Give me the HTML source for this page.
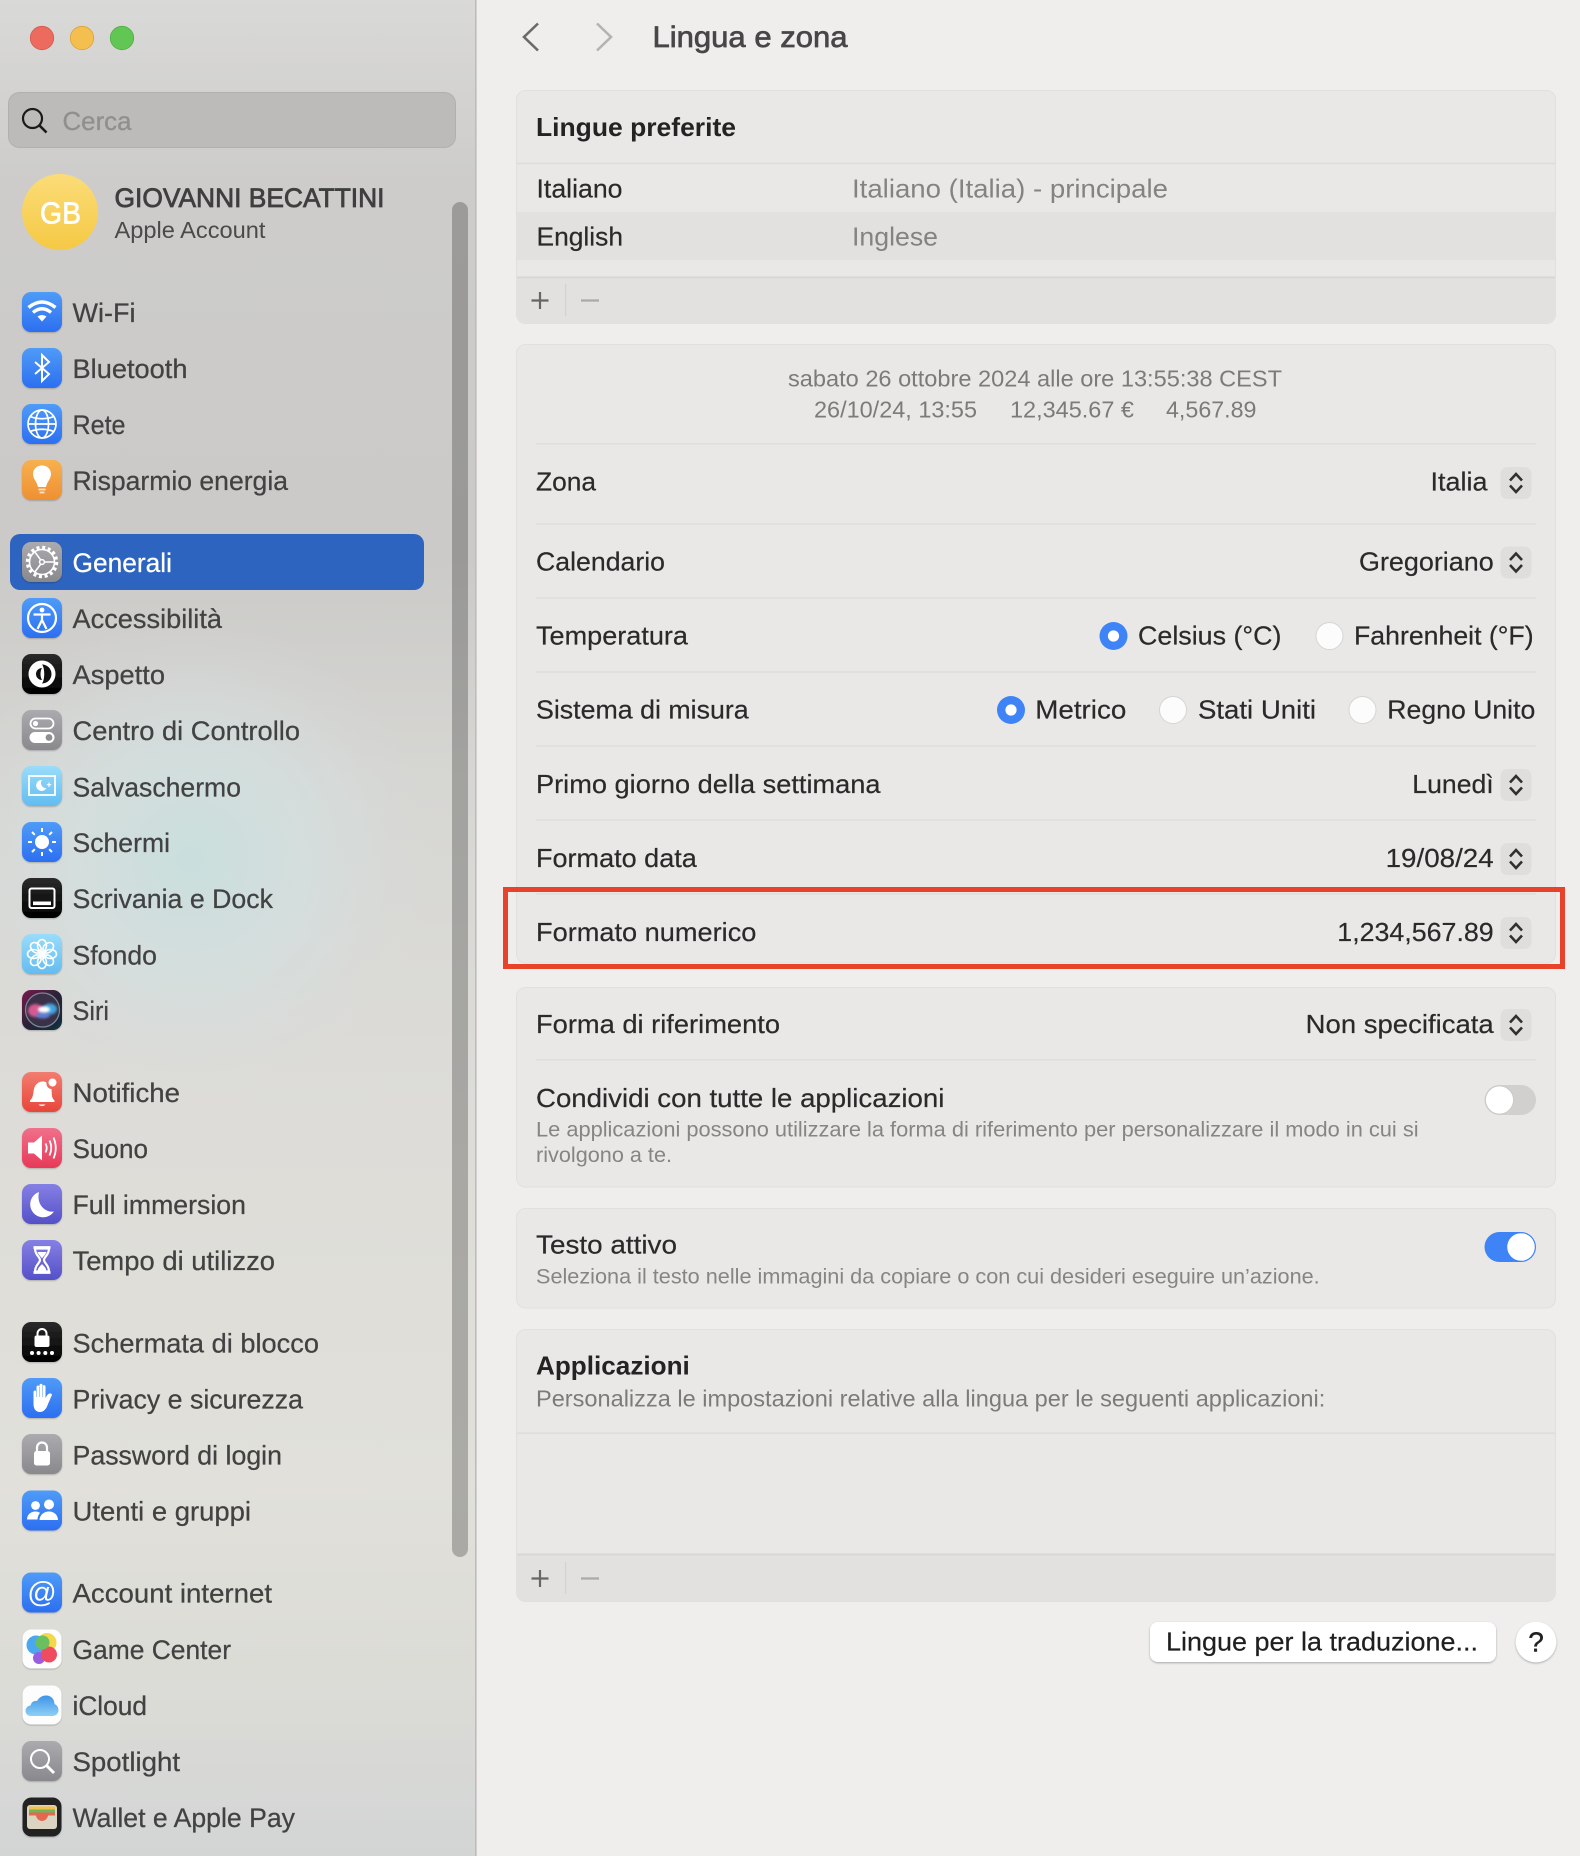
<!DOCTYPE html>
<html lang="it">
<head>
<meta charset="utf-8">
<title>Lingua e zona</title>
<style>
html,body{margin:0;padding:0;background:#efeeec;width:1580px;height:1856px;overflow:hidden}
svg{display:block;position:absolute;left:0;top:0}
text{font-family:"Liberation Sans",sans-serif;white-space:pre}
.s{font-size:26.5px;fill:#424242;stroke:#424242;stroke-width:.25px}
.r{font-size:26px;fill:#2a2a2a;stroke:#2a2a2a;stroke-width:.2px}
.g{font-size:26px;fill:#838381}
.d{font-size:21.5px;fill:#858584}
.p{font-size:23.5px;fill:#7b7b7a}
.b{font-size:26px;font-weight:bold;fill:#232323}
.w{fill:#fff}
</style>
</head>
<body>
<svg width="1580" height="1856" viewBox="0 0 1580 1856" xmlns="http://www.w3.org/2000/svg">
<defs>
<linearGradient id="side" x1="0" y1="0" x2="0" y2="1">
<stop offset="0" stop-color="#d9d9d7"/><stop offset=".1" stop-color="#cdccca"/><stop offset=".3" stop-color="#cbcac8"/><stop offset=".42" stop-color="#d6d6d3"/><stop offset=".6" stop-color="#dddcd8"/><stop offset=".8" stop-color="#e1e0da"/><stop offset=".9" stop-color="#dcdcd7"/><stop offset="1" stop-color="#d3d5d5"/>
</linearGradient>
<radialGradient id="teal" gradientUnits="userSpaceOnUse" cx="190" cy="860" r="240">
<stop offset="0" stop-color="#c9dfdd"/><stop offset=".5" stop-color="#d3e0e0" stop-opacity=".7"/><stop offset="1" stop-color="#d9dcdb" stop-opacity="0"/>
</radialGradient>
<linearGradient id="blue" x1="0" y1="0" x2="0" y2="1"><stop offset="0" stop-color="#4f9bf8"/><stop offset="1" stop-color="#2c6ff0"/></linearGradient>
<linearGradient id="gray" x1="0" y1="0" x2="0" y2="1"><stop offset="0" stop-color="#ababaf"/><stop offset="1" stop-color="#88888d"/></linearGradient>
<linearGradient id="lblue" x1="0" y1="0" x2="0" y2="1"><stop offset="0" stop-color="#9adcfa"/><stop offset="1" stop-color="#62bcf0"/></linearGradient>
<linearGradient id="orange" x1="0" y1="0" x2="0" y2="1"><stop offset="0" stop-color="#f7b04f"/><stop offset="1" stop-color="#ee9033"/></linearGradient>
<linearGradient id="red" x1="0" y1="0" x2="0" y2="1"><stop offset="0" stop-color="#f27d70"/><stop offset="1" stop-color="#e8463a"/></linearGradient>
<linearGradient id="pink" x1="0" y1="0" x2="0" y2="1"><stop offset="0" stop-color="#f0708a"/><stop offset="1" stop-color="#e63a58"/></linearGradient>
<linearGradient id="indigo" x1="0" y1="0" x2="0" y2="1"><stop offset="0" stop-color="#8580e4"/><stop offset="1" stop-color="#5550c8"/></linearGradient>
<linearGradient id="black" x1="0" y1="0" x2="0" y2="1"><stop offset="0" stop-color="#2a2a2a"/><stop offset="1" stop-color="#000"/></linearGradient>
<linearGradient id="avatar" x1="0" y1="0" x2="0" y2="1"><stop offset="0" stop-color="#fbdc78"/><stop offset="1" stop-color="#f5c944"/></linearGradient>
<linearGradient id="cloud" x1="0" y1="0" x2="0" y2="1"><stop offset="0" stop-color="#3d94e8"/><stop offset="1" stop-color="#8fd0f4"/></linearGradient>
<linearGradient id="sirib" x1="0" y1="0" x2="1" y2="1"><stop offset="0" stop-color="#7a1d50"/><stop offset=".5" stop-color="#2a2236"/><stop offset="1" stop-color="#0e3040"/></linearGradient>
<filter id="ish" x="-10%" y="-10%" width="120%" height="125%"><feDropShadow dx="0" dy="1" stdDeviation=".8" flood-color="#000" flood-opacity=".22"/></filter>
<filter id="bsh" x="-10%" y="-20%" width="120%" height="150%"><feDropShadow dx="0" dy="1" stdDeviation="1" flood-color="#000" flood-opacity=".3"/></filter>
<filter id="soft" x="-30%" y="-30%" width="160%" height="160%"><feGaussianBlur stdDeviation="1.4"/></filter>
<g id="st">
<rect x="-15.5" y="-16" width="31" height="32" rx="7" fill="#dfdedc"/>
<path d="M-6-2.5 0-9 6-2.5M-6 2.5 0 9 6 2.5" fill="none" stroke="#303030" stroke-width="2.6"/>
</g>
<g id="ron"><circle r="14" fill="#3f84f6"/><circle r="5.6" fill="#fff"/></g>
<g id="rof"><circle r="13.5" fill="#fcfcfc" stroke="#d6d5d3" stroke-width="1"/></g>
</defs>

<!-- main bg -->
<rect width="1580" height="1856" fill="#efeeec"/>
<!-- sidebar -->
<rect width="475" height="1856" fill="url(#side)"/>
<rect width="475" height="1856" fill="url(#teal)"/>
<rect x="475" width="1.6" height="1856" fill="#bdbcba"/>
<!-- traffic lights -->
<circle cx="42" cy="38" r="11.7" fill="#ed6a5e" stroke="#d5574c" stroke-width=".8"/>
<circle cx="82" cy="38" r="11.7" fill="#f5bf4f" stroke="#dca23a" stroke-width=".8"/>
<circle cx="122" cy="38" r="11.7" fill="#62c655" stroke="#52ad45" stroke-width=".8"/>
<!-- search -->
<rect x="8.5" y="92.5" width="447" height="55" rx="11" fill="#bcbbb9" stroke="#b1b0ae"/>
<circle cx="32.5" cy="118.5" r="9.5" fill="none" stroke="#1a1a1a" stroke-width="2.2"/>
<path d="M39.5 125.5 46.5 132.5" stroke="#1a1a1a" stroke-width="2.6"/>
<text x="62.5" y="129.8" font-size="26" fill="#8f8f8d" stroke="#8f8f8d" stroke-width=".3" textLength="69" lengthAdjust="spacingAndGlyphs">Cerca</text>
<!-- profile -->
<ellipse cx="60" cy="212" rx="38" ry="38" fill="url(#avatar)"/>
<text x="40" y="223.4" font-size="31" fill="#fff" stroke="#fff" stroke-width=".7" textLength="41" lengthAdjust="spacingAndGlyphs">GB</text>
<text x="114.5" y="207" font-size="27" fill="#3f3f3f" stroke="#3f3f3f" stroke-width=".8" textLength="270" lengthAdjust="spacingAndGlyphs">GIOVANNI BECATTINI</text>
<text x="114.5" y="238" font-size="23" fill="#4a4a4a" textLength="151" lengthAdjust="spacingAndGlyphs">Apple Account</text>
<!-- scrollbar -->
<rect x="452" y="202" width="16" height="1355" rx="8" fill="#000" fill-opacity=".24"/>
<!-- selected -->
<rect x="10" y="534" width="414" height="56" rx="10" fill="#2d64c0"/>

<!-- sidebar labels -->
<g>
<text class="s" x="72.5" y="322" textLength="63" lengthAdjust="spacingAndGlyphs">Wi-Fi</text>
<text class="s" x="72.5" y="378" textLength="115" lengthAdjust="spacingAndGlyphs">Bluetooth</text>
<text class="s" x="72.5" y="434" textLength="53" lengthAdjust="spacingAndGlyphs">Rete</text>
<text class="s" x="72.5" y="490" textLength="215.5" lengthAdjust="spacingAndGlyphs">Risparmio energia</text>
<text class="s" x="72.5" y="572" textLength="99.5" lengthAdjust="spacingAndGlyphs" style="fill:#fff;stroke:#fff">Generali</text>
<text class="s" x="72.5" y="628" textLength="149.5" lengthAdjust="spacingAndGlyphs">Accessibilità</text>
<text class="s" x="72.5" y="684" textLength="92.5" lengthAdjust="spacingAndGlyphs">Aspetto</text>
<text class="s" x="72.5" y="740" textLength="227.5" lengthAdjust="spacingAndGlyphs">Centro di Controllo</text>
<text class="s" x="72.5" y="796.5" textLength="168.5" lengthAdjust="spacingAndGlyphs">Salvaschermo</text>
<text class="s" x="72.5" y="852" textLength="97.5" lengthAdjust="spacingAndGlyphs">Schermi</text>
<text class="s" x="72.5" y="908" textLength="200.5" lengthAdjust="spacingAndGlyphs">Scrivania e Dock</text>
<text class="s" x="72.5" y="964.5" textLength="84.5" lengthAdjust="spacingAndGlyphs">Sfondo</text>
<text class="s" x="72.5" y="1020" textLength="36.5" lengthAdjust="spacingAndGlyphs">Siri</text>
<text class="s" x="72.5" y="1102" textLength="107.5" lengthAdjust="spacingAndGlyphs">Notifiche</text>
<text class="s" x="72.5" y="1158" textLength="75.5" lengthAdjust="spacingAndGlyphs">Suono</text>
<text class="s" x="72.5" y="1214" textLength="173.5" lengthAdjust="spacingAndGlyphs">Full immersion</text>
<text class="s" x="72.5" y="1270" textLength="202.5" lengthAdjust="spacingAndGlyphs">Tempo di utilizzo</text>
<text class="s" x="72.5" y="1352.5" textLength="246.5" lengthAdjust="spacingAndGlyphs">Schermata di blocco</text>
<text class="s" x="72.5" y="1408.5" textLength="230.5" lengthAdjust="spacingAndGlyphs">Privacy e sicurezza</text>
<text class="s" x="72.5" y="1464.5" textLength="209.5" lengthAdjust="spacingAndGlyphs">Password di login</text>
<text class="s" x="72.5" y="1520.5" textLength="178.5" lengthAdjust="spacingAndGlyphs">Utenti e gruppi</text>
<text class="s" x="72.5" y="1602.5" textLength="199.5" lengthAdjust="spacingAndGlyphs">Account internet</text>
<text class="s" x="72.5" y="1659" textLength="158.5" lengthAdjust="spacingAndGlyphs">Game Center</text>
<text class="s" x="72.5" y="1715" textLength="74.5" lengthAdjust="spacingAndGlyphs">iCloud</text>
<text class="s" x="72.5" y="1771" textLength="107.5" lengthAdjust="spacingAndGlyphs">Spotlight</text>
<text class="s" x="72.5" y="1827" textLength="222.5" lengthAdjust="spacingAndGlyphs">Wallet e Apple Pay</text>
</g>

<!-- ICONS -->
<!-- wifi -->
<g transform="translate(22 292)"><rect width="40" height="40" rx="9" fill="url(#blue)" filter="url(#ish)"/>
<path d="M6.5 15.5Q20 4.5 33.5 15.5M11 20.5Q20 13 29 20.5" fill="none" stroke="#fff" stroke-width="3.4"/><path d="M15.5 24.5Q20 21.5 24.5 24.5L20 29.5Z" fill="#fff"/></g>
<!-- bluetooth -->
<g transform="translate(22 348)"><rect width="40" height="40" rx="9" fill="url(#blue)" filter="url(#ish)"/>
<path d="M13 14 27 26 20 33V7L27 14 13 26" fill="none" stroke="#fff" stroke-width="2"/></g>
<!-- rete -->
<g transform="translate(22 404)"><rect width="40" height="40" rx="9" fill="url(#blue)" filter="url(#ish)"/>
<g fill="none" stroke="#fff" stroke-width="1.7"><circle cx="20" cy="20" r="14"/><ellipse cx="20" cy="20" rx="6.5" ry="14"/><path d="M8 12.5Q20 17 32 12.5M8 27.5Q20 23 32 27.5M6 20H34"/></g></g>
<!-- bulb -->
<g transform="translate(22 460)"><rect width="40" height="40" rx="9" fill="url(#orange)" filter="url(#ish)"/>
<path d="M20 5.5C13.5 5.5 11 10.5 11 14C11 19 15 21.5 16 27H24C25 21.5 29 19 29 14C29 10.5 26.5 5.5 20 5.5Z" fill="#fff"/><path d="M16.5 29.5H23.5M17.5 32.5H22.5" stroke="#fbe3c4" stroke-width="1.8"/></g>
<!-- gear -->
<g transform="translate(22 542)"><rect width="40" height="40" rx="9" fill="url(#gray)" filter="url(#ish)"/>
<circle cx="20" cy="20" r="14.5" fill="none" stroke="#fff" stroke-width="3.5" stroke-dasharray="3 2.7"/><circle cx="20" cy="20" r="12.5" fill="none" stroke="#fff" stroke-width="1.6"/>
<circle cx="20" cy="20" r="2.4" fill="none" stroke="#fff" stroke-width="1.5"/><path d="M22.4 20H32.5M18.8 18 12.5 9.5M18.8 22 12.5 30.5" stroke="#fff" stroke-width="1.5"/></g>
<!-- accessibility -->
<g transform="translate(22 598)"><rect width="40" height="40" rx="9" fill="url(#blue)" filter="url(#ish)"/>
<circle cx="20" cy="20" r="14" fill="none" stroke="#fff" stroke-width="2.2"/><circle cx="20" cy="12" r="2.4" fill="#fff"/><path d="M11.5 16.5H28.5M20 16.5V22M20 22 15.5 31M20 22 24.5 31" stroke="#fff" stroke-width="2.2" fill="none"/></g>
<!-- aspetto -->
<g transform="translate(22 654)"><rect width="40" height="40" rx="9" fill="url(#black)" filter="url(#ish)"/>
<circle cx="20" cy="20" r="13.5" fill="#fff"/><path d="M20 10.5A9.5 9.5 0 0 1 20 29.5C23 26 23 14 20 10.5Z" fill="#111"/><path d="M20 14A6 6 0 0 0 20 26C18 23 18 17 20 14Z" fill="#111"/></g>
<!-- centro -->
<g transform="translate(22 710)"><rect width="40" height="40" rx="9" fill="url(#gray)" filter="url(#ish)"/>
<rect x="8.5" y="8.5" width="23" height="10" rx="5" fill="none" stroke="#fff" stroke-width="1.8"/><circle cx="13.5" cy="13.5" r="2.6" fill="#fff"/>
<rect x="7.5" y="22" width="25" height="11" rx="5.5" fill="#fff"/><circle cx="27" cy="27.5" r="3.4" fill="#8e8e93"/></g>
<!-- salvaschermo -->
<g transform="translate(22 766)"><rect width="40" height="40" rx="9" fill="url(#lblue)" filter="url(#ish)"/>
<rect x="7" y="10" width="26" height="19" fill="none" stroke="#fff" stroke-width="1.8"/><path d="M20 14A5.5 5.5 0 1 0 24.5 22 5 5 0 0 1 20 14Z" fill="#fff"/><path d="M27 16.5V21M24.8 18.7H29.2" stroke="#fff" stroke-width="1.1"/></g>
<!-- schermi -->
<g transform="translate(22 822)"><rect width="40" height="40" rx="9" fill="url(#blue)" filter="url(#ish)"/>
<circle cx="20" cy="20" r="7" fill="#fff"/><g stroke="#fff" stroke-width="2"><path d="M20 6V10M20 30V34M6 20H10M30 20H34M10 10 12.8 12.8M27.2 27.2 30 30M10 30 12.8 27.2M27.2 12.8 30 10"/></g></g>
<!-- scrivania -->
<g transform="translate(22 878)"><rect width="40" height="40" rx="9" fill="url(#black)" filter="url(#ish)"/>
<rect x="7.5" y="10.5" width="25" height="19.5" rx="2" fill="none" stroke="#fff" stroke-width="2"/><rect x="11" y="23.5" width="18" height="3.6" fill="#fff"/></g>
<!-- sfondo -->
<g transform="translate(22 934)"><rect width="40" height="40" rx="9" fill="url(#lblue)" filter="url(#ish)"/>
<g fill="none" stroke="#fff" stroke-width="1.6"><ellipse cx="20" cy="11.5" rx="4.5" ry="6"/><ellipse cx="20" cy="28.5" rx="4.5" ry="6"/><ellipse cx="11.5" cy="20" rx="6" ry="4.5"/><ellipse cx="28.5" cy="20" rx="6" ry="4.5"/><ellipse cx="13.8" cy="13.8" rx="4.5" ry="6" transform="rotate(-45 13.8 13.8)"/><ellipse cx="26.2" cy="13.8" rx="4.5" ry="6" transform="rotate(45 26.2 13.8)"/><ellipse cx="13.8" cy="26.2" rx="4.5" ry="6" transform="rotate(45 13.8 26.2)"/><ellipse cx="26.2" cy="26.2" rx="4.5" ry="6" transform="rotate(-45 26.2 26.2)"/></g><circle cx="20" cy="20" r="2.2" fill="#fff"/></g>
<!-- siri -->
<g transform="translate(22 990)"><rect width="40" height="40" rx="9" fill="url(#sirib)" filter="url(#ish)"/>
<circle cx="20.5" cy="20" r="17" fill="#3a3048" stroke="#7b8a94" stroke-width="1.2"/>
<ellipse cx="13.5" cy="20.5" rx="7.5" ry="6.5" fill="#d65a92" filter="url(#soft)"/><ellipse cx="28" cy="19" rx="7" ry="5.5" fill="#3fa4e0" filter="url(#soft)"/><ellipse cx="21" cy="25" rx="7" ry="3.5" fill="#5f7fd0" filter="url(#soft)"/><ellipse cx="22" cy="19.5" rx="6" ry="3.2" fill="#fff" filter="url(#soft)"/></g>
<!-- notifiche -->
<g transform="translate(22 1072)"><rect width="40" height="40" rx="9" fill="url(#red)" filter="url(#ish)"/>
<path d="M8 28.5C11.5 25.5 11 21 12 17C13 12.5 16.5 9.5 21 9.5C23 9.5 24.5 10.5 24.5 10.5C24 14 26.5 17 29.5 17C30 21 29 25.5 32.5 28.5V30H8Z" fill="#fff"/><circle cx="30.5" cy="10.5" r="4" fill="#fff"/><path d="M16.5 32.5A4 2.8 0 0 0 23.5 32.5Z" fill="#fff"/></g>
<!-- suono -->
<g transform="translate(22 1128)"><rect width="40" height="40" rx="9" fill="url(#pink)" filter="url(#ish)"/>
<path d="M6 14.5H12L20 7.5V32.5L12 25.5H6Z" fill="#fff"/><path d="M23.5 15.5Q26 20 23.5 24.5M27.5 12.5Q31 20 27.5 27.5M31.5 9.5Q36 20 31.5 30.5" fill="none" stroke="#fff" stroke-width="1.8"/></g>
<!-- full immersion -->
<g transform="translate(22 1184)"><rect width="40" height="40" rx="9" fill="url(#indigo)" filter="url(#ish)"/>
<path d="M17 8A13 13 0 1 0 32 27.5C24 29 14 21 17 8Z" fill="#fff"/></g>
<!-- tempo -->
<g transform="translate(22 1240)"><rect width="40" height="40" rx="9" fill="url(#indigo)" filter="url(#ish)"/>
<path d="M11.5 7.5H28.5M11.5 32.5H28.5" stroke="#fff" stroke-width="2.8"/><path d="M13 8.5C13 15 18 17 18 20C18 23 13 25 13 31.5H27C27 25 22 23 22 20C22 17 27 15 27 8.5Z" fill="none" stroke="#fff" stroke-width="2.2"/><path d="M15.5 12H24.5C23.5 15 21 16.5 20 18.5C19 16.5 16.5 15 15.5 12ZM15.5 31C16 27 19 25.5 20 24C21 25.5 24 27 24.5 31Z" fill="#fff"/></g>
<!-- schermata -->
<g transform="translate(22 1322)"><rect width="40" height="40" rx="9" fill="url(#black)" filter="url(#ish)"/>
<rect x="12.5" y="13.5" width="15" height="11.5" rx="2" fill="#fff"/><path d="M15.5 14V11.5A4.5 4.5 0 0 1 24.5 11.5V14" fill="none" stroke="#fff" stroke-width="2"/><g fill="#fff"><circle cx="10" cy="31" r="2"/><circle cx="16.6" cy="31" r="2"/><circle cx="23.3" cy="31" r="2"/><circle cx="30" cy="31" r="2"/></g></g>
<!-- privacy -->
<g transform="translate(22 1378)"><rect width="40" height="40" rx="9" fill="url(#blue)" filter="url(#ish)"/>
<path d="M11.5 14C11.5 12 14.5 12 14.5 14V9C14.5 7 17.5 7 17.5 9V7.2C17.5 5.2 20.5 5.2 20.5 7.2V8.5C20.5 6.7 23.5 6.7 23.5 8.5V20C25 17 26 16 27.5 15.5C29.5 15 30.5 16.5 29.5 18L26 26C24.5 31 21.5 34 18 34C13.5 34 11.5 30.5 11.5 26Z" fill="#fff"/><path d="M14.6 12V19M17.6 9V19M20.6 8V19" stroke="#9cc3f7" stroke-width=".9"/></g>
<!-- password -->
<g transform="translate(22 1434)"><rect width="40" height="40" rx="9" fill="url(#gray)" filter="url(#ish)"/>
<rect x="12" y="17" width="16" height="14.5" rx="2.5" fill="#fff"/><path d="M15 17.5V13.5A5 5 0 0 1 25 13.5V17.5" fill="none" stroke="#fff" stroke-width="2.2"/></g>
<!-- utenti -->
<g transform="translate(22 1490.5)"><rect width="40" height="40" rx="9" fill="url(#blue)" filter="url(#ish)"/>
<g fill="#fff"><circle cx="13.5" cy="15" r="4.4"/><circle cx="27" cy="14" r="5"/><path d="M5 29C5 24 9 21 13.5 21C15.5 21 17 21.5 18 22.5C16.5 24 15.5 26.5 15.5 29Z"/><path d="M17.5 29.5C17.5 24.5 22 21 27 21C32 21 36 24.5 36 29.5Z"/></g></g>
<!-- account -->
<g transform="translate(22 1572.5)"><rect width="40" height="40" rx="9" fill="url(#blue)" filter="url(#ish)"/>
<text x="20" y="29.5" text-anchor="middle" font-size="29" fill="#fff">@</text></g>
<!-- game -->
<g transform="translate(22 1629)"><rect x=".5" y=".5" width="39" height="39" rx="9" fill="#fdfdfd" filter="url(#ish)"/>
<circle cx="25" cy="13.5" r="9.5" fill="#f3d84a"/><circle cx="14" cy="16" r="9.5" fill="#4aa7f0"/><circle cx="17" cy="29" r="6" fill="#9a5de0"/><circle cx="27" cy="25.5" r="8" fill="#ef4c5f"/><circle cx="20.5" cy="13.5" r="7" fill="#6abf5e"/></g>
<!-- icloud -->
<g transform="translate(22 1685)"><rect x=".5" y=".5" width="39" height="39" rx="9" fill="#fdfdfd" filter="url(#ish)"/>
<path d="M9 31C5.5 31 3.5 28.5 3.5 26C3.5 23 5.5 21 8.5 20.5C9.5 17 12 15.5 15 16C17 12.5 20 10.5 24 10.5C29 10.5 32.5 14 32.5 19C35 20 36.5 22.5 36.5 25C36.5 28.5 34 31 30.5 31Z" fill="url(#cloud)"/></g>
<!-- spotlight -->
<g transform="translate(22 1741)"><rect width="40" height="40" rx="9" fill="url(#gray)" filter="url(#ish)"/>
<circle cx="18" cy="18" r="9" fill="none" stroke="#fff" stroke-width="2"/><path d="M24.5 24.5 32 32" stroke="#fff" stroke-width="3"/></g>
<!-- wallet -->
<g transform="translate(22 1797)"><rect x=".5" y=".5" width="39" height="39" rx="9" fill="#222" filter="url(#ish)"/>
<rect x="5" y="8" width="30" height="24" rx="3" fill="#dcd4c2"/><rect x="7" y="9.5" width="26" height="3" fill="#f2c14a"/><rect x="7" y="12.5" width="26" height="3" fill="#6fb55e"/><rect x="7" y="15.5" width="26" height="3" fill="#e5674f"/><path d="M14 18.5H26C25.5 22 22.5 24 20 24C17.5 24 14.5 22 14 18.5Z" fill="#e5674f"/></g>

<!-- TOP BAR -->
<path d="M538 23.5 524 37 538 50.5" fill="none" stroke="#6a6a6a" stroke-width="2.6"/>
<path d="M597 23.5 611 37 597 50.5" fill="none" stroke="#b3b3b2" stroke-width="2.6"/>
<text x="652.5" y="47" font-size="30" fill="#474747" stroke="#474747" stroke-width=".7" textLength="195" lengthAdjust="spacingAndGlyphs">Lingua e zona</text>

<!-- PANEL 1 -->
<rect x="516.5" y="90.5" width="1039" height="233" rx="9" fill="#e9e8e6" stroke="#e1e0de"/>
<rect x="517" y="162.5" width="1038" height="1.8" fill="#dfdedc"/>
<rect x="517" y="212" width="1038" height="48" fill="#e2e1df"/>
<path d="M517 277H1555V314A9 9 0 0 1 1546 323H526A9 9 0 0 1 517 314Z" fill="#e2e1df"/>
<rect x="517" y="276.5" width="1038" height="1.8" fill="#d7d6d4"/>
<path d="M540 292V309M531.5 300.5H548.5" stroke="#666" stroke-width="2.2"/>
<rect x="565" y="284" width="1.2" height="32" fill="#d3d2d0"/>
<path d="M581 300.5H599" stroke="#aaa" stroke-width="2.2"/>
<text class="b" x="536" y="136" textLength="200" lengthAdjust="spacingAndGlyphs">Lingue preferite</text>
<text class="r" x="536.5" y="197.6" textLength="86" lengthAdjust="spacingAndGlyphs">Italiano</text>
<text class="g" x="852" y="197.6" textLength="316" lengthAdjust="spacingAndGlyphs">Italiano (Italia) - principale</text>
<text class="r" x="536.5" y="245.6" textLength="86.5" lengthAdjust="spacingAndGlyphs">English</text>
<text class="g" x="852" y="245.6" textLength="86" lengthAdjust="spacingAndGlyphs">Inglese</text>

<!-- PANEL 2 -->
<rect x="516.5" y="344.5" width="1039" height="618.5" rx="9" fill="#e9e8e6" stroke="#e1e0de"/>
<text class="p" x="788" y="386.3" textLength="494" lengthAdjust="spacingAndGlyphs">sabato 26 ottobre 2024 alle ore 13:55:38 CEST</text>
<text class="p" x="814" y="417.3" textLength="163" lengthAdjust="spacingAndGlyphs">26/10/24, 13:55</text>
<text class="p" x="1010" y="417.3" textLength="124" lengthAdjust="spacingAndGlyphs">12,345.67 €</text>
<text class="p" x="1166" y="417.3" textLength="90.5" lengthAdjust="spacingAndGlyphs">4,567.89</text>
<g fill="#dfdedc">
<rect x="536" y="443" width="1000" height="1.6"/>
<rect x="536" y="523.2" width="1000" height="1.6"/>
<rect x="536" y="597.2" width="1000" height="1.6"/>
<rect x="536" y="671.2" width="1000" height="1.6"/>
<rect x="536" y="745.2" width="1000" height="1.6"/>
<rect x="536" y="819.2" width="1000" height="1.6"/>
<rect x="536" y="893" width="1000" height="1.6"/>
</g>
<text class="r" x="536" y="490.6" textLength="60" lengthAdjust="spacingAndGlyphs">Zona</text>
<text class="r" x="1430.5" y="490.6" textLength="57" lengthAdjust="spacingAndGlyphs">Italia</text>
<use href="#st" x="1516" y="483"/>
<text class="r" x="536" y="570.6" textLength="129" lengthAdjust="spacingAndGlyphs">Calendario</text>
<text class="r" x="1359" y="570.6" textLength="134.7" lengthAdjust="spacingAndGlyphs">Gregoriano</text>
<use href="#st" x="1516" y="562.5"/>
<text class="r" x="536" y="644.6" textLength="152" lengthAdjust="spacingAndGlyphs">Temperatura</text>
<use href="#ron" x="1113.5" y="636"/>
<text class="r" x="1138" y="644.6" textLength="143.5" lengthAdjust="spacingAndGlyphs">Celsius (°C)</text>
<use href="#rof" x="1329.5" y="636"/>
<text class="r" x="1354" y="644.6" textLength="179.6" lengthAdjust="spacingAndGlyphs">Fahrenheit (°F)</text>
<text class="r" x="536" y="718.6" textLength="212.7" lengthAdjust="spacingAndGlyphs">Sistema di misura</text>
<use href="#ron" x="1011" y="710"/>
<text class="r" x="1035.3" y="718.6" textLength="91" lengthAdjust="spacingAndGlyphs">Metrico</text>
<use href="#rof" x="1173" y="710"/>
<text class="r" x="1198" y="718.6" textLength="118" lengthAdjust="spacingAndGlyphs">Stati Uniti</text>
<use href="#rof" x="1362.5" y="710"/>
<text class="r" x="1387.3" y="718.6" textLength="148" lengthAdjust="spacingAndGlyphs">Regno Unito</text>
<text class="r" x="536" y="793" textLength="344.5" lengthAdjust="spacingAndGlyphs">Primo giorno della settimana</text>
<text class="r" x="1412.3" y="793" textLength="81.4" lengthAdjust="spacingAndGlyphs">Lunedì</text>
<use href="#st" x="1516" y="785"/>
<text class="r" x="536" y="867" textLength="160.8" lengthAdjust="spacingAndGlyphs">Formato data</text>
<text class="r" x="1385.6" y="867" textLength="108.1" lengthAdjust="spacingAndGlyphs">19/08/24</text>
<use href="#st" x="1516" y="859"/>
<text class="r" x="536" y="941.2" textLength="220.4" lengthAdjust="spacingAndGlyphs">Formato numerico</text>
<text class="r" x="1337.3" y="941.2" textLength="156.4" lengthAdjust="spacingAndGlyphs">1,234,567.89</text>
<use href="#st" x="1516" y="933"/>

<!-- RED HIGHLIGHT -->
<rect x="505.5" y="889.5" width="1057" height="77" fill="none" stroke="#e8432a" stroke-width="5"/>

<!-- PANEL 3 -->
<rect x="516.5" y="987.5" width="1039" height="199.5" rx="9" fill="#e9e8e6" stroke="#e1e0de"/>
<rect x="536" y="1059" width="1000" height="1.6" fill="#dfdedc"/>
<text class="r" x="536" y="1032.8" textLength="244" lengthAdjust="spacingAndGlyphs">Forma di riferimento</text>
<text class="r" x="1305.7" y="1032.8" textLength="188" lengthAdjust="spacingAndGlyphs">Non specificata</text>
<use href="#st" x="1516" y="1025"/>
<text class="r" x="536" y="1106.8" textLength="408.4" lengthAdjust="spacingAndGlyphs">Condividi con tutte le applicazioni</text>
<text class="d" x="536" y="1136.5" textLength="882.6" lengthAdjust="spacingAndGlyphs">Le applicazioni possono utilizzare la forma di riferimento per personalizzare il modo in cui si</text>
<text class="d" x="536" y="1162.2" textLength="136" lengthAdjust="spacingAndGlyphs">rivolgono a te.</text>
<rect x="1484.5" y="1085" width="51.5" height="30" rx="15" fill="#d1d0ce"/>
<circle cx="1499.5" cy="1100" r="14" fill="#fff" stroke="#c8c7c5" stroke-width=".8"/>

<!-- PANEL 4 -->
<rect x="516.5" y="1208.5" width="1039" height="99.5" rx="9" fill="#e9e8e6" stroke="#e1e0de"/>
<text class="r" x="536" y="1253.6" textLength="141" lengthAdjust="spacingAndGlyphs">Testo attivo</text>
<text class="d" x="536" y="1283.3" textLength="783.7" lengthAdjust="spacingAndGlyphs">Seleziona il testo nelle immagini da copiare o con cui desideri eseguire un’azione.</text>
<rect x="1484.5" y="1232" width="51.5" height="30" rx="15" fill="#3f84f6"/>
<circle cx="1521" cy="1247" r="13.8" fill="#fff"/>

<!-- PANEL 5 -->
<rect x="516.5" y="1329.5" width="1039" height="272" rx="9" fill="#e9e8e6" stroke="#e1e0de"/>
<rect x="517" y="1432.3" width="1038" height="1.8" fill="#dfdedc"/>
<path d="M517 1554.5H1555V1592.5A9 9 0 0 1 1546 1601.5H526A9 9 0 0 1 517 1592.5Z" fill="#e2e1df"/>
<rect x="517" y="1553.5" width="1038" height="1.8" fill="#d7d6d4"/>
<path d="M540 1570V1587M531.5 1578.5H548.5" stroke="#666" stroke-width="2.2"/>
<rect x="565" y="1562" width="1.2" height="32" fill="#d3d2d0"/>
<path d="M581 1578.5H599" stroke="#aaa" stroke-width="2.2"/>
<text class="b" x="536" y="1374.5" textLength="153.8" lengthAdjust="spacingAndGlyphs">Applicazioni</text>
<text class="p" x="536" y="1406.3" textLength="789.3" lengthAdjust="spacingAndGlyphs">Personalizza le impostazioni relative alla lingua per le seguenti applicazioni:</text>

<!-- BUTTONS -->
<rect x="1150" y="1622" width="346" height="40" rx="8" fill="#fff" filter="url(#bsh)"/>
<text x="1166" y="1650.5" font-size="26" fill="#1f1f1f" stroke="#1f1f1f" stroke-width=".2" textLength="312" lengthAdjust="spacingAndGlyphs">Lingue per la traduzione...</text>
<circle cx="1536" cy="1642" r="20.3" fill="#fff" filter="url(#bsh)"/>
<text x="1536" y="1651.5" font-size="28" fill="#222" stroke="#222" stroke-width=".4" text-anchor="middle">?</text>
</svg>
</body>
</html>
